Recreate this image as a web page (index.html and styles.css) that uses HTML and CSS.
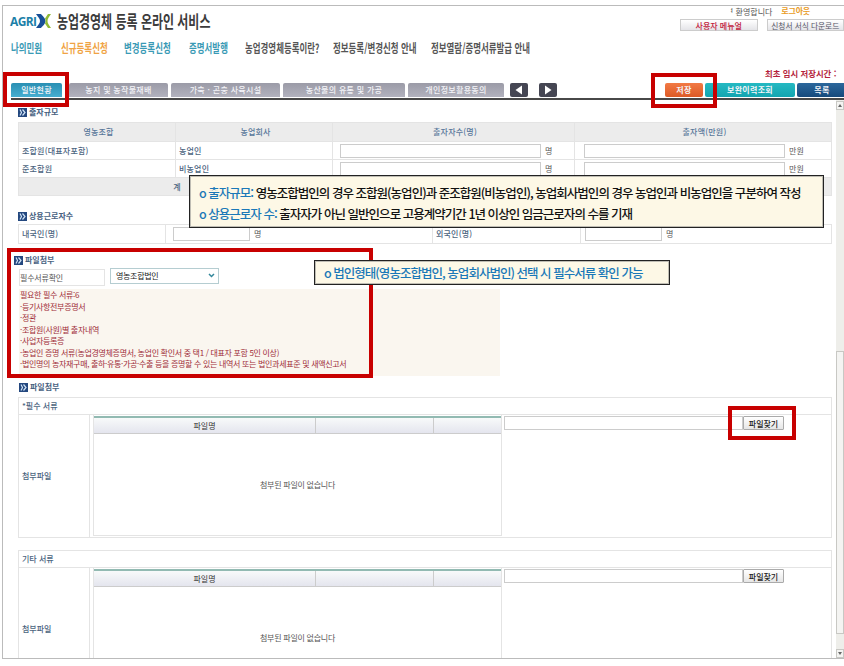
FILE: index.html
```html
<!DOCTYPE html>
<html lang="ko">
<head>
  <meta charset="UTF-8">
  <title>농업경영체 등록 온라인 서비스</title>
  <link rel="stylesheet" href="styles.css">
</head>
<body>

<svg class="defs">
  <symbol id="mark" viewBox="0 0 9 9">
    <rect width="9" height="9" fill="#24487f"/>
    <path d="M2 1.500 3.500 4.500 2 7.500M4.500 1.500 7 4.500 4.500 7.500" fill="none" stroke="#cfe2f5" stroke-width="1.200"/>
  </symbol>
</svg>

<div class="frame">
  <header>
    <div class="brand">
      <h1>
        <span class="agri">AGRI</span>
        <svg class="x-logo" width="15" height="14" viewBox="0 0 15 14">
          <path d="M0 0h5c1.500 2 4.500 4 4.500 7S6.500 12 5 14H0c2-3 4-4.500 4-7S2 3 0 0z" fill="#174f97"/>
          <path d="M15 0h-3L9 4.500c.8 1.500.8 3.500 0 5L12 14h3c-2-3-3.500-4.500-3.500-7S13 3 15 0z" fill="#8fba35"/>
        </svg>
        <span class="title">농업경영체 등록 온라인 서비스</span>
      </h1>
      <nav>
        <a class="n1">나의민원</a>
        <a class="n2 on">신규등록신청</a>
        <a class="n3">변경등록신청</a>
        <a class="n4">증명서발행</a>
        <a class="n5 dark">농업경영체등록이란?</a>
        <a class="n6 dark">정보등록/변경신청 안내</a>
        <a class="n7 dark">정보열람/증명서류발급 안내</a>
      </nav>
    </div>
    <div class="user">
      <div class="login"><span>ᅧ 환영합니다</span><b>로그아웃</b></div>
      <div class="links"><a class="manual">사용자 메뉴얼</a><a class="forms">신청서 서식 다운로드</a></div>
      <div class="saved">최초 임시 저장시간 :</div>
    </div>
  </header>

  <div class="tabs">
    <a class="tab t1 on">일반현황</a>
    <a class="tab t2">농지 및 농작물재배</a>
    <a class="tab t3">가축 · 곤충 사육시설</a>
    <a class="tab t4">농산물의 유통 및 가공</a>
    <a class="tab t5">개인정보활용동의</a>
    <svg class="arrow" viewBox="0 0 18 14"><rect width="18" height="14" rx="2" fill="#454653"/><path d="M12 2.500v9L5.500 7z" fill="#fff"/></svg>
    <svg class="arrow next" viewBox="0 0 18 14"><rect width="18" height="14" rx="2" fill="#454653"/><path d="M6 2.500v9L12.500 7z" fill="#fff"/></svg>
    <a class="act save">저장</a>
    <a class="act history">보완이력조회</a>
    <a class="act list">목록</a>
  </div>

  <main>
    <div class="content">
      <h2 class="h-first"><svg><use href="#mark"/></svg>출자규모</h2>
      <div class="capital">
        <div class="row head"><span>영농조합</span><span>농업회사</span><span>출자자수(명)</span><span>출자액(만원)</span></div>
        <div class="row"><span>조합원(대표자포함)</span><span>농업인</span><span><input type="text">명</span><span><input type="text">만원</span></div>
        <div class="row"><span>준조합원</span><span>비농업인</span><span><input type="text">명</span><span><input type="text">만원</span></div>
        <div class="row total"><span>계</span><span></span><span></span></div>
      </div>

      <h2 class="h-worker"><svg><use href="#mark"/></svg>상용근로자수</h2>
      <div class="worker">
        <span class="lb">내국인(명)</span><span><input type="text">명</span>
        <span class="lb">외국인(명)</span><span><input type="text">명</span>
      </div>

      <div class="docs">
        <h2><svg><use href="#mark"/></svg>파일첨부</h2>
        <div class="pick">
          <span class="check">필수서류확인</span>
          <span class="select">영농조합법인<svg width="7" height="5" viewBox="0 0 7 5"><path d="M1 1l2.500 2.500L6 1" fill="none" stroke="#33879b" stroke-width="1.500"/></svg></span>
        </div>
        <ul>
          <li>필요한 필수 서류:6</li>
          <li>·등기사항전부증명서</li>
          <li>·정관</li>
          <li>·조합원(사원)별 출자내역</li>
          <li>·사업자등록증</li>
          <li>·농업인 증명 서류(농업경영체증명서, 농업인 확인서 중 택1 / 대표자 포함 5인 이상)</li>
          <li>·법인명의 농자재구매, 출하·유통·가공·수출 등을 증명할 수 있는 내역서 또는 법인과세표준 및 새액신고서</li>
        </ul>
      </div>

      <h2 class="h-file"><svg><use href="#mark"/></svg>파일첨부</h2>
      <div class="attach">
        <div class="kind">*필수 서류</div>
        <div class="body">
          <div class="lb">첨부파일</div>
          <div class="grid">
            <div class="cols"><span>파일명</span><span></span><span></span></div>
            <div class="empty">첨부된 파일이 없습니다</div>
          </div>
          <div class="upload"><input type="text"><button>파일찾기</button></div>
        </div>
      </div>
      <div class="attach etc">
        <div class="kind">기타 서류</div>
        <div class="body">
          <div class="lb">첨부파일</div>
          <div class="grid">
            <div class="cols"><span>파일명</span><span></span><span></span></div>
            <div class="empty">첨부된 파일이 없습니다</div>
          </div>
          <div class="upload"><input type="text"><button>파일찾기</button></div>
        </div>
      </div>
    </div>
    <div class="scroll">
      <i class="up"></i>
      <i class="thumb"></i>
      <i class="down"></i>
    </div>
  </main>
</div>

<!-- guide marks over the page -->
<div class="mark m-tab"></div>
<div class="mark m-save"></div>
<div class="mark m-docs"></div>
<div class="mark m-find"></div>

<div class="note note1">
  <p><em>o 출자규모:</em> 영농조합법인의 경우 조합원(농업인)과 준조합원(비농업인), 농업회사법인의 경우 농업인과 비농업인을 구분하여 작성</p>
  <p><em>o 상용근로자 수:</em> 출자자가 아닌 일반인으로 고용계약기간 1년 이상인 임금근로자의 수를 기재</p>
</div>
<div class="note note2">
  <p><em>o 법인형태(영농조합법인, 농업회사법인) 선택 시 필수서류 확인 가능</em></p>
</div>

</body>
</html>
```
FILE: styles.css
```css
* {
  box-sizing: border-box;
}
body {
  margin: 0;
  width: 844px;
  height: 666px;
  overflow: hidden;
  background: #fff;
  font-family: "Noto Sans CJK KR", sans-serif;
  font-size: 8px;
  line-height: 12px;
  color: #555;
  white-space: nowrap;
}
.defs {
  display: none;
}
.frame {
  margin: 5px 0 0 2px;
  height: 654px;
  border: 1px solid #bbb;
  border-right: 0;
  overflow: hidden;
}
h1, h2, p, ul {
  margin: 0;
  padding: 0;
}

/* header */
header {
  display: flex;
  justify-content: space-between;
  height: 77px;
}
h1 {
  display: flex;
  align-items: center;
  height: 20px;
  margin: 5px 0 0 7px;
}
.agri {
  flex: none;
  width: 26px;
  font: bold 12px "Open Sans", sans-serif;
  letter-spacing: -0.6px;
  color: #1c7fa8;
}
.x-logo {
  flex: none;
}
.title {
  flex: none;
  margin-left: 6px;
  font-size: 17px;
  font-weight: 700;
  color: #3c3c3c;
  transform: scaleX(0.705);
  transform-origin: left;
}
.brand {
  width: 560px;
}
nav {
  display: flex;
  margin: 9px 0 0 8px;
}
nav a {
  flex: none;
  font-size: 12px;
  line-height: 16px;
  font-weight: 700;
  color: #3a9ab5;
  transform: scaleX(0.705);
  transform-origin: left;
}
nav .on {
  color: #f0a344;
}
nav .dark {
  color: #555;
}
.n1 { width: 50px; }
.n2 { width: 63px; }
.n3 { width: 65px; }
.n4 { width: 56px; }
.n5 { width: 88px; }
.n6 { width: 98px; }
.user {
  width: 164px;
}
.login {
  display: flex;
  justify-content: space-between;
  height: 13px;
  padding: 0 34px 0 49px;
  line-height: 11px;
}
.login span {
  margin-left: -3px;
}
.login b {
  color: #e99b25;
  font-size: 8px;
  line-height: 9px;
  letter-spacing: -0.2px;
}
.links {
  display: flex;
  gap: 9px;
}
.links a {
  width: 78px;
  height: 12px;
  border: 1px solid #ccc;
  background: linear-gradient(#fff, #e4e4e8);
  line-height: 11px;
  text-align: center;
  color: #556;
}
.links .manual {
  color: #c2203c;
  font-weight: 500;
}
.links .forms {
  font-size: 7.700px;
}
.saved {
  margin: 36px 0 0 85px;
  color: #b51f3c;
  font-weight: bold;
  font-size: 8.400px;
}

/* tabs */
.tabs {
  display: flex;
  width: 838px;
  height: 17px;
  margin-left: 8px;
  border-bottom: 2px solid #484848;
}
.tab, .act {
  flex: none;
  height: 14px;
  margin-right: 3px;
  border-radius: 2px 2px 0 0;
  background: linear-gradient(#9b9ba7, #b2b2be);
  color: #f4f4f8;
  font-weight: 500;
  line-height: 14px;
  text-align: center;
  letter-spacing: 0.3px;
}
.t1 { width: 51px; }
.t2 { width: 99px; }
.t3 { width: 109px; }
.t4 { width: 122px; }
.t5 { width: 96px; }
.t1.on {
  margin-right: 7px;
  background: linear-gradient(#2a8fb3, #46aed0);
}
.arrow {
  flex: none;
  width: 18px;
  height: 14px;
  margin-left: 3px;
}
.next {
  margin-left: 11px;
}
.act {
  border-radius: 2px;
  margin-right: 2px;
  font-weight: bold;
}
.save {
  width: 38px;
  margin-left: 108px;
  background: linear-gradient(#f27a45, #dd5a26);
}
.history {
  width: 90px;
  background: linear-gradient(#25b9c2, #12a5b0);
}
.list {
  width: 50px;
  background: linear-gradient(#2c679c, #174a7c);
}

/* content */
main {
  display: flex;
  height: 558px;
}
.content {
  width: 833px;
  padding-left: 15px;
}
h2 {
  display: flex;
  align-items: center;
  gap: 2px;
  height: 12px;
  font-size: 8px;
  font-weight: 700;
  color: #47617f;
}
h2 svg {
  width: 9px;
  height: 9px;
}
input {
  flex: none;
  height: 14px;
  padding: 0;
  border: 1px solid #ccc;
  background: #fff;
}
.h-first {
  margin-top: 6px;
}
.capital {
  width: 814px;
  height: 74px;
  margin-top: 4px;
  border: 1px solid #e4e4e4;
}
.row {
  display: grid;
  grid-template-columns: 157px 157px 242px 256px;
  height: 18px;
  border-bottom: 1px solid #e4e4e4;
}
.row span {
  display: flex;
  align-items: center;
  padding-left: 3px;
  border-right: 1px solid #e4e4e4;
  color: #4c6480;
  font-weight: 500;
  letter-spacing: 0.2px;
}
.row span:last-child {
  border-right: 0;
}
.row.head {
  height: 19px;
}
.head span {
  justify-content: center;
  background: #ececec;
  color: #58779a;
}
.row span:nth-child(n+3):not(.head span) {
  gap: 4px;
  padding-left: 7px;
  color: #555;
  font-weight: 400;
}
.row span:nth-child(4):not(.head span) {
  padding-left: 9px;
}
.row input {
  width: 201px;
}
.row.total {
  grid-template-columns: 314px 242px 256px;
  height: 17px;
  background: #ececec;
  border-bottom: 0;
}
.total span:first-child {
  justify-content: center;
}
.h-worker {
  margin-top: 14px;
}
.worker {
  display: grid;
  grid-template-columns: 147px 267px 148px 250px;
  width: 814px;
  height: 20px;
  margin-top: 2px;
  border: 1px solid #e4e4e4;
}
.worker span {
  display: flex;
  align-items: center;
  gap: 4px;
  padding-left: 7px;
  border-right: 1px solid #e4e4e4;
}
.worker span:last-child {
  border-right: 0;
  padding-left: 4px;
}
.worker .lb {
  padding-left: 3px;
  color: #4c6480;
  font-weight: 500;
  letter-spacing: 0.2px;
}
.worker input {
  width: 77px;
}
.docs {
  height: 127px;
  margin: 10px 0 0 -4px;
}
.pick {
  display: flex;
  gap: 5px;
  height: 18px;
  margin: 2px 0 0 5px;
}
.check {
  width: 86px;
  height: 17px;
  margin-top: 1px;
  border: 1px solid #e4e4e4;
  line-height: 15px;
  letter-spacing: -0.2px;
}
.select {
  display: flex;
  align-items: center;
  justify-content: space-between;
  width: 109px;
  height: 16px;
  padding: 0 3px 1px 5px;
  border: 1px solid #b5cdd1;
  color: #222;
  letter-spacing: -0.3px;
}
.docs ul {
  width: 481px;
  height: 87px;
  margin: 3px 0 0 5px;
  padding-left: 1px;
  background: #faf6ef;
  list-style: none;
  color: #a02c38;
  line-height: 11.500px;
  letter-spacing: -0.320px;
}
.h-file {
  margin-left: 1px;
}
.attach {
  width: 814px;
  height: 141px;
  margin-top: 4px;
  border: 1px solid #e4e4e4;
}
.kind {
  height: 17px;
  padding-left: 3px;
  border-bottom: 1px solid #e4e4e4;
  line-height: 15px;
  color: #4c6480;
  font-weight: 500;
}
.body {
  display: flex;
  height: 123px;
}
.body .lb {
  width: 71px;
  padding-left: 3px;
  border-right: 1px solid #e4e4e4;
  line-height: 122px;
  color: #4c6480;
  font-weight: 500;
}
.grid {
  width: 409px;
  height: 121px;
  margin-left: 3px;
  border: 1px solid #e4e4e4;
  border-top: 0;
}
.cols {
  display: grid;
  grid-template-columns: 222px 118px 67px;
  height: 18px;
  margin-top: 1px;
  border-top: 2px solid #92bab2;
  border-bottom: 1px solid #ccc;
  background: linear-gradient(#f8fafa, #e4e5ee);
  line-height: 15px;
  text-align: center;
  color: #333;
}
.cols span {
  border-right: 1px solid #ccc;
}
.cols span:last-child {
  border-right: 0;
}
.empty {
  text-align: center;
  line-height: 101px;
  letter-spacing: -0.250px;
}
.upload {
  display: flex;
  padding: 1px 0 0 2px;
}
.upload input {
  width: 239px;
}
.upload button {
  width: 41px;
  height: 14px;
  padding: 0;
  border: 1px solid #aaa;
  border-radius: 1px;
  background: linear-gradient(#fff, #e6e6e6);
  font: 500 8px/11px "Noto Sans CJK KR", sans-serif;
  color: #222;
}
.etc {
  margin-top: 12px;
}

/* scrollbar */
.scroll {
  position: relative;
  width: 8px;
  background: #eeeeea;
}
.scroll i {
  position: absolute;
  left: 0;
  width: 8px;
  border: 1px solid #c8c8c4;
  background: #f4f4f2;
}
.up {
  top: 1px;
  height: 9px;
}
.thumb {
  top: 251px;
  height: 283px;
}
.down {
  bottom: 0;
  height: 9px;
}
.up::after, .down::after {
  content: "";
  position: absolute;
  left: 1px;
  top: 2px;
  border: 2px solid transparent;
}
.up::after {
  border-top: 0;
  border-bottom: 3px solid #666;
}
.down::after {
  border-bottom: 0;
  border-top: 3px solid #666;
}

/* guide marks */
.mark {
  position: absolute;
  border: 4px solid #c80000;
}
.m-tab {
  left: 3px;
  top: 72px;
  width: 66px;
  height: 35px;
}
.m-save {
  left: 651px;
  top: 73px;
  width: 66px;
  height: 35px;
}
.m-docs {
  left: 7px;
  top: 248px;
  width: 366px;
  height: 130px;
}
.m-find {
  left: 728px;
  top: 406px;
  width: 68px;
  height: 34px;
}
.note {
  position: absolute;
  border: 1px solid #222;
  outline: 1px solid #8888;
  outline-offset: -2px;
  background: #fdf8e6;
  color: #111;
  font-size: 12.500px;
  line-height: 21px;
}
.note em {
  font-style: normal;
  color: #1a78b8;
}
.note1 {
  left: 189px;
  top: 175px;
  width: 635px;
  height: 53px;
  padding: 6px 0 0 9px;
}
.note2 {
  left: 314px;
  top: 260px;
  width: 356px;
  height: 25px;
  padding: 1px 0 0 9px;
}
.note p {
  width: max-content;
  font-weight: 500;
  letter-spacing: -0.970px;
}
```
